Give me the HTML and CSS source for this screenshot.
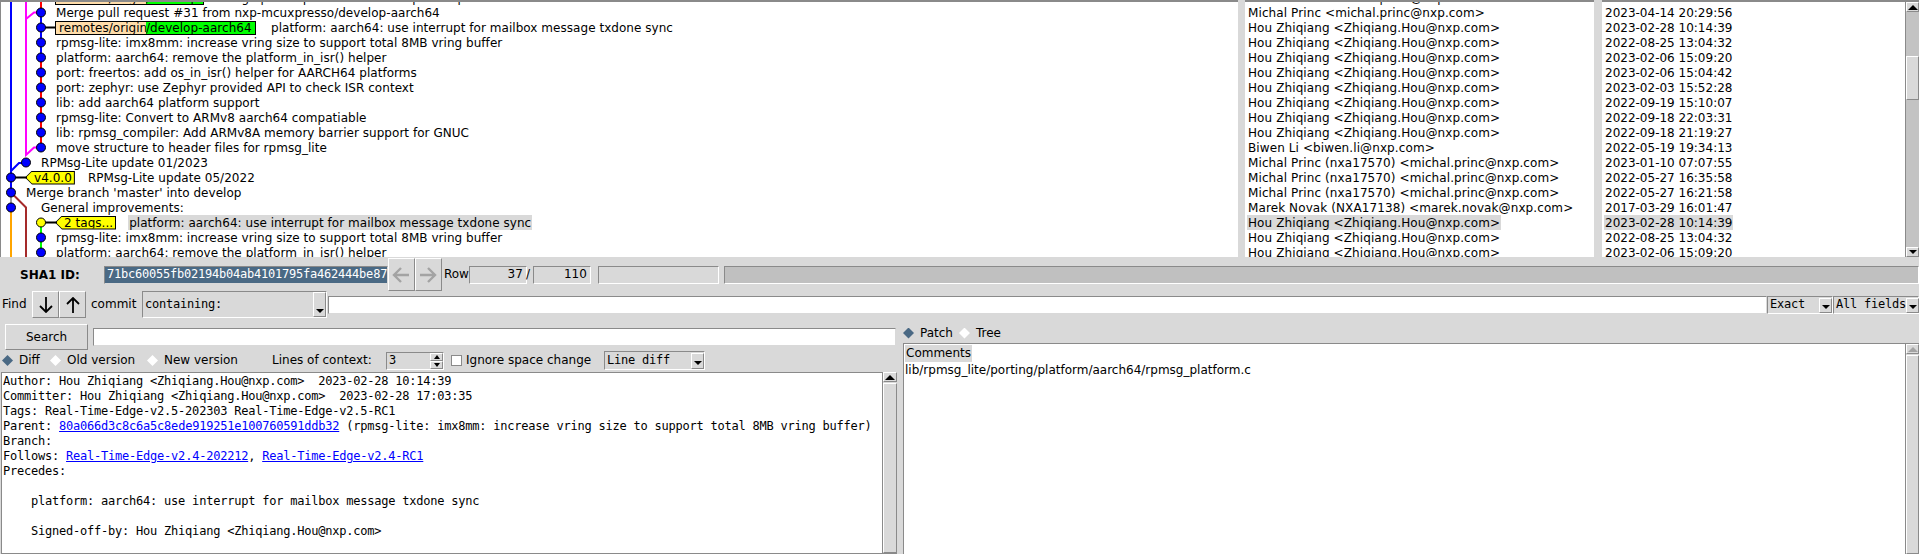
FILE: index.html
```html
<!DOCTYPE html>
<html lang="en">
<head>
<meta charset="utf-8">
<title>gitk</title>
<link rel="stylesheet" href="styles.css">
</head>
<body>
<section class="top">
  <div class="list graph">
    <div class="rows">
      <div class="row ind56"><span class="ref"><span class="ref-a">remotes/origin</span><span class="ref-b short">/develop</span></span><span class="msg">Merge pull request #32 from nxp-mcuxpresso</span></div>
      <div class="row ind56"><span>Merge pull request #31 from nxp-mcuxpresso/develop-aarch64</span></div>
      <div class="row ind56"><span class="ref"><span class="ref-a">remotes/origin</span><span class="ref-b">/develop-aarch64</span></span><span class="msg">platform: aarch64: use interrupt for mailbox message txdone sync</span></div>
      <div class="row ind56"><span>rpmsg-lite: imx8mm: increase vring size to support total 8MB vring buffer</span></div>
      <div class="row ind56"><span>platform: aarch64: remove the platform_in_isr() helper</span></div>
      <div class="row ind56"><span>port: freertos: add os_in_isr() helper for AARCH64 platforms</span></div>
      <div class="row ind56"><span>port: zephyr: use Zephyr provided API to check ISR context</span></div>
      <div class="row ind56"><span>lib: add aarch64 platform support</span></div>
      <div class="row ind56"><span>rpmsg-lite: Convert to ARMv8 aarch64 compatiable</span></div>
      <div class="row ind56"><span>lib: rpmsg_compiler: Add ARMv8A memory barrier support for GNUC</span></div>
      <div class="row ind56"><span>move structure to header files for rpmsg_lite</span></div>
      <div class="row ind41"><span>RPMsg-Lite update 01/2023</span></div>
      <div class="row ind26"><span class="tag"><span class="tag-in">v4.0.0</span></span><span class="msg">RPMsg-Lite update 05/2022</span></div>
      <div class="row ind26"><span>Merge branch 'master' into develop</span></div>
      <div class="row ind41"><span>General improvements:</span></div>
      <div class="row ind56"><span class="tag"><span class="tag-in">2 tags...</span></span><span class="msg sel">platform: aarch64: use interrupt for mailbox message txdone sync</span></div>
      <div class="row ind56"><span>rpmsg-lite: imx8mm: increase vring size to support total 8MB vring buffer</span></div>
      <div class="row ind56"><span>platform: aarch64: remove the platform_in_isr() helper</span></div>
    </div>
    <svg class="lanes" width="70" height="260" viewBox="0 0 70 260" aria-hidden="true">
      <g fill="none" stroke-width="2">
        <path stroke="#ff00ff" d="M26 0V155L34 147.5H41M26 19L34 12.5H41"/>
        <path stroke="#ff0000" d="M41 0V12.5M41 57.5V147.5"/>
        <path stroke="#0000ff" d="M41 12.5V57.5M11 0V192.5M11 171L19 163H26"/>
        <path stroke="#a0a0a0" d="M11 192.5V207.5"/>
        <path stroke="#ffa500" d="M11 207.5V260"/>
        <path stroke="#a52a2a" d="M11 192.5L26 207.5V260"/>
        <path stroke="#00ff00" d="M41 222.5V260"/>
        <path stroke="#000" d="M41 27.5H56M11 177.5H27M41 222.5H57"/>
      </g>
      <g fill="#0000ff" stroke="#000">
        <circle cx="41" cy="12.5" r="4.5"/><circle cx="41" cy="27.5" r="4.5"/><circle cx="41" cy="42.5" r="4.5"/>
        <circle cx="41" cy="57.5" r="4.5"/><circle cx="41" cy="72.5" r="4.5"/><circle cx="41" cy="87.5" r="4.5"/>
        <circle cx="41" cy="102.5" r="4.5"/><circle cx="41" cy="117.5" r="4.5"/><circle cx="41" cy="132.5" r="4.5"/>
        <circle cx="41" cy="147.5" r="4.5"/><circle cx="26" cy="162.5" r="4.5"/><circle cx="11" cy="177.5" r="4.5"/>
        <circle cx="11" cy="192.5" r="4.5"/><circle cx="11" cy="207.5" r="4.5"/>
        <circle cx="41" cy="222.5" r="4.5" fill="#ffff00"/>
        <circle cx="41" cy="237.5" r="4.5"/><circle cx="41" cy="252.5" r="4.5"/>
      </g>
    </svg>
  </div>
  <div class="sash"></div>
  <div class="list author">
    <div class="rows">
      <div class="row"><span>Michal Princ &lt;michal.princ@nxp.com&gt;</span></div>
      <div class="row"><span>Michal Princ &lt;michal.princ@nxp.com&gt;</span></div>
      <div class="row"><span>Hou Zhiqiang &lt;Zhiqiang.Hou@nxp.com&gt;</span></div>
      <div class="row"><span>Hou Zhiqiang &lt;Zhiqiang.Hou@nxp.com&gt;</span></div>
      <div class="row"><span>Hou Zhiqiang &lt;Zhiqiang.Hou@nxp.com&gt;</span></div>
      <div class="row"><span>Hou Zhiqiang &lt;Zhiqiang.Hou@nxp.com&gt;</span></div>
      <div class="row"><span>Hou Zhiqiang &lt;Zhiqiang.Hou@nxp.com&gt;</span></div>
      <div class="row"><span>Hou Zhiqiang &lt;Zhiqiang.Hou@nxp.com&gt;</span></div>
      <div class="row"><span>Hou Zhiqiang &lt;Zhiqiang.Hou@nxp.com&gt;</span></div>
      <div class="row"><span>Hou Zhiqiang &lt;Zhiqiang.Hou@nxp.com&gt;</span></div>
      <div class="row"><span>Biwen Li &lt;biwen.li@nxp.com&gt;</span></div>
      <div class="row"><span>Michal Princ (nxa17570) &lt;michal.princ@nxp.com&gt;</span></div>
      <div class="row"><span>Michal Princ (nxa17570) &lt;michal.princ@nxp.com&gt;</span></div>
      <div class="row"><span>Michal Princ (nxa17570) &lt;michal.princ@nxp.com&gt;</span></div>
      <div class="row"><span>Marek Novak (NXA17138) &lt;marek.novak@nxp.com&gt;</span></div>
      <div class="row"><span class="sel">Hou Zhiqiang &lt;Zhiqiang.Hou@nxp.com&gt;</span></div>
      <div class="row"><span>Hou Zhiqiang &lt;Zhiqiang.Hou@nxp.com&gt;</span></div>
      <div class="row"><span>Hou Zhiqiang &lt;Zhiqiang.Hou@nxp.com&gt;</span></div>
    </div>
  </div>
  <div class="sash wide"></div>
  <div class="list date">
    <div class="rows">
      <div class="row"><span>2023-04-14 20:32:10</span></div>
      <div class="row"><span>2023-04-14 20:29:56</span></div>
      <div class="row"><span>2023-02-28 10:14:39</span></div>
      <div class="row"><span>2022-08-25 13:04:32</span></div>
      <div class="row"><span>2023-02-06 15:09:20</span></div>
      <div class="row"><span>2023-02-06 15:04:42</span></div>
      <div class="row"><span>2023-02-03 15:52:28</span></div>
      <div class="row"><span>2022-09-19 15:10:07</span></div>
      <div class="row"><span>2022-09-18 22:03:31</span></div>
      <div class="row"><span>2022-09-18 21:19:27</span></div>
      <div class="row"><span>2022-05-19 19:34:13</span></div>
      <div class="row"><span>2023-01-10 07:07:55</span></div>
      <div class="row"><span>2022-05-27 16:35:58</span></div>
      <div class="row"><span>2022-05-27 16:21:58</span></div>
      <div class="row"><span>2017-03-29 16:01:47</span></div>
      <div class="row"><span class="sel">2023-02-28 10:14:39</span></div>
      <div class="row"><span>2022-08-25 13:04:32</span></div>
      <div class="row"><span>2023-02-06 15:09:20</span></div>
    </div>
  </div>
  <div class="scrollbar top-bar">
    <div class="sb-btn"><span class="tri-up"></span></div>
    <div class="sb-gap one"></div>
    <div class="sb-thumb fixed"></div>
    <div class="sb-gap"></div>
    <div class="sb-btn"><span class="tri-down"></span></div>
  </div>
</section>

<section class="sha-bar">
  <span class="sha-label">SHA1 ID:</span>
  <span class="field sha mono">71bc60055fb02194b04ab4101795fa462444be87</span>
  <span class="tool-btn nav"><svg width="18" height="18" viewBox="0 0 18 18"><path d="M17 9H2M9 2L2 9L9 16" fill="none" stroke="#a3a3a3" stroke-width="2.4"/></svg></span>
  <span class="tool-btn nav"><svg width="18" height="18" viewBox="0 0 18 18"><path d="M1 9H16M9 2L16 9L9 16" fill="none" stroke="#a3a3a3" stroke-width="2.4"/></svg></span>
  <span class="row-label">Row</span>
  <span class="field count">37</span>
  <span class="slash">/</span>
  <span class="field count">110</span>
  <span class="field status"></span>
  <span class="progress"></span>
</section>

<section class="find-bar">
  <span class="find-label">Find</span>
  <span class="tool-btn find-btn"><svg width="16" height="16" viewBox="0 0 16 16"><path d="M8 0V15M2 9L8 15L14 9" fill="none" stroke="#000" stroke-width="1.8"/></svg></span>
  <span class="tool-btn find-btn"><svg width="16" height="16" viewBox="0 0 16 16"><path d="M8 16V1M2 7L8 1L14 7" fill="none" stroke="#000" stroke-width="1.8"/></svg></span>
  <span class="commit-label">commit</span>
  <span class="combo containing mono"><span class="combo-text">containing:</span><span class="combo-btn"><span class="tri-down"></span></span></span>
  <span class="entry find-entry"></span>
  <span class="combo exact mono"><span class="combo-text">Exact</span><span class="combo-btn"><span class="tri-down"></span></span></span>
  <span class="combo fields mono"><span class="combo-text">All fields</span><span class="combo-btn"><span class="tri-down"></span></span></span>
</section>

<section class="lower">
  <div class="left">
    <div class="search-bar">
      <span class="search-btn">Search</span>
      <span class="entry search-entry"></span>
    </div>
    <div class="diff-bar">
      <span class="radio on"></span><span class="opt diff-opt">Diff</span>
      <span class="radio"></span><span class="opt old-opt">Old version</span>
      <span class="radio"></span><span class="opt new-opt">New version</span>
      <span class="context">Lines of context:</span>
      <span class="spin mono"><span class="spin-val">3</span><span class="spin-btns"><span class="spin-btn"><span class="tri-up"></span></span><span class="spin-btn"><span class="tri-down"></span></span></span></span>
      <span class="check"></span><span class="check-label">Ignore space change</span>
      <span class="combo line-diff mono"><span class="combo-text">Line diff</span><span class="combo-btn"><span class="tri-down"></span></span></span>
    </div>
    <div class="text-pane">
<pre class="details mono">Author: Hou Zhiqiang &lt;Zhiqiang.Hou@nxp.com&gt;  2023-02-28 10:14:39
Committer: Hou Zhiqiang &lt;Zhiqiang.Hou@nxp.com&gt;  2023-02-28 17:03:35
Tags: Real-Time-Edge-v2.5-202303 Real-Time-Edge-v2.5-RC1
Parent: <a href="#p">80a066d3c8c6a5c8ede919251e100760591ddb32</a> (rpmsg-lite: imx8mm: increase vring size to support total 8MB vring buffer)
Branch:
Follows: <a href="#f1">Real-Time-Edge-v2.4-202212</a>, <a href="#f2">Real-Time-Edge-v2.4-RC1</a>
Precedes:

    platform: aarch64: use interrupt for mailbox message txdone sync

    Signed-off-by: Hou Zhiqiang &lt;Zhiqiang.Hou@nxp.com&gt;</pre>
      <div class="scrollbar low-bar">
        <div class="sb-btn"><span class="tri-up"></span></div>
        <div class="sb-thumb"></div>
      </div>
    </div>
  </div>
  <div class="right">
    <div class="view-bar">
      <span class="radio on"></span><span class="opt patch-opt">Patch</span>
      <span class="radio"></span><span class="opt">Tree</span>
    </div>
    <div class="text-pane files">
      <div class="file-list">
        <div class="file"><span class="sel">Comments</span></div>
        <div class="file">lib/rpmsg_lite/porting/platform/aarch64/rpmsg_platform.c</div>
      </div>
      <div class="scrollbar files-bar">
        <div class="sb-btn"><span class="tri-up off"></span></div>
        <div class="sb-thumb"></div>
      </div>
    </div>
  </div>
</section>
</body>
</html>
```

FILE: styles.css
```css
* { box-sizing: border-box; }
html, body { margin: 0; padding: 0; }
body {
  width: 1919px;
  height: 554px;
  overflow: hidden;
  background: #d9d9d9;
  color: #000;
  font: 12px/15px "DejaVu Sans", sans-serif;
}
.mono { font-family: "DejaVu Sans Mono", monospace; font-size: 12px; letter-spacing: -0.22px; white-space: nowrap; }
.sel { background: #d9d9d9; }

/* commit list */
.top { display: flex; height: 257px; }
.list {
  position: relative;
  background: #fff;
  overflow: hidden;
  border-top: 2px solid #8a8a8a;
  white-space: nowrap;
}
.graph { width: 1238px; border-left: 1px solid #8a8a8a; letter-spacing: 0.04px; }
.author { width: 349px; padding-left: 2px; letter-spacing: 0.1px; }
.date { width: 303px; padding-left: 2px; }
.sash { width: 7px; }
.sash.wide { width: 8px; }
.rows { margin-top: -12px; }
.row { height: 15px; display: flex; align-items: center; }
.row > span { height: 15px; padding: 1px 1px 0; }
.ind56 { padding-left: 54px; }
.ind41 { padding-left: 39px; }
.ind26 { padding-left: 24px; }
.row > .msg { margin-left: 14px; }
.row > .tag + .msg { margin-left: 12px; }
.lanes { position: absolute; top: -2px; left: -1px; }
.row > .ref {
  display: flex;
  height: 14px;
  padding: 0;
  border: 1px solid #000;
  line-height: 12px;
}
.ref-a { background: #ffddaa; padding-left: 3px; width: 90px; }
.ref-b { background: #00ff00; width: 109px; }
.ref-b.short { width: 57px; }
.row > .tag {
  display: flex;
  height: 14px;
  padding: 1px;
  background: #000;
  clip-path: polygon(7px 0, 100% 0, 100% 100%, 7px 100%, 0 50%);
}
.tag-in {
  background: #ffff00;
  padding: 0 2px 0 8px;
  line-height: 12px;
  clip-path: polygon(6px 0, 100% 0, 100% 100%, 6px 100%, 0 50%);
}

/* scrollbars */
.scrollbar {
  width: 14px;
  display: flex;
  flex-direction: column;
  background: #c3c3c3;
  border-left: 1px solid #8a8a8a;
}
.top-bar { border-top: 2px solid #8a8a8a; }
.sb-btn {
  flex: none;
  height: 10px;
  background: #d9d9d9;
  border: 1px solid;
  border-color: #fff #8a8a8a #8a8a8a #fff;
  display: flex;
  align-items: center;
  justify-content: center;
}
.sb-gap { flex: 1; }
.sb-gap.one { flex: none; height: 44px; }
.sb-thumb {
  flex: 1;
  margin-top: 1px;
  background: #d9d9d9;
  border: 1px solid;
  border-color: #fff #8a8a8a #8a8a8a #fff;
}
.sb-thumb.fixed { flex: none; height: 44px; margin-top: 0; }
.tri-up, .tri-down {
  display: block;
  width: 0;
  height: 0;
  border-left: 5px solid transparent;
  border-right: 5px solid transparent;
}
.tri-up { border-bottom: 5px solid #000; }
.tri-up.off { border-bottom-color: #a3a3a3; }
.tri-down { border-top: 4px solid #000; border-left-width: 4px; border-right-width: 4px; }

/* SHA row */
.sha-bar { display: flex; align-items: center; height: 34px; padding-top: 1px; }
.sha-label { width: 104px; padding-left: 20px; font-weight: bold; margin-top: 1px; }
.field {
  display: block;
  height: 18px;
  line-height: 15px;
  border: 1px solid;
  border-color: #8a8a8a #fff #fff #8a8a8a;
}
.sha {
  width: 284px;
  padding-left: 2px;
  background: #4a6984;
  color: #fff;
  border-color: #8a8a8a #d9d9d9 #d9d9d9 #8a8a8a;
}
.tool-btn {
  display: flex;
  align-items: center;
  justify-content: center;
  background: #d9d9d9;
  border: 1px solid;
  border-color: #fff #8a8a8a #8a8a8a #fff;
}
.nav { width: 27px; height: 33px; }
.row-label { width: 25px; margin-left: 2px; }
.count { width: 58px; text-align: right; padding-right: 3px; }
.slash { width: 7px; margin-left: -1px; }
.status { width: 121px; margin-left: 7px; }
.progress {
  width: 1196px;
  height: 18px;
  margin-left: 5px;
  background: #c0c0c0;
  border: 1px solid;
  border-color: #8a8a8a #fff #fff #8a8a8a;
}

/* find row */
.find-bar { display: flex; align-items: center; height: 27px; }
.find-label { width: 32px; padding-left: 2px; }
.find-btn { width: 27px; height: 27px; }
.commit-label { width: 51px; margin-left: 5px; }
.entry {
  display: block;
  background: #fff;
  height: 18px;
  border: 1px solid;
  border-color: #8a8a8a #d9d9d9 #d9d9d9 #8a8a8a;
}
.combo {
  display: flex;
  background: #d9d9d9;
  border: 1px solid;
  border-color: #8a8a8a #fff #fff #8a8a8a;
}
.combo-text { flex: 1; padding-left: 2px; display: flex; align-items: center; }
.combo-btn {
  flex: none;
  width: 13px;
  margin-top: 1px;
  background: #d9d9d9;
  border: 1px solid;
  border-color: #fff #8a8a8a #8a8a8a #fff;
  display: flex;
  align-items: flex-end;
  justify-content: center;
  padding-bottom: 3px;
}
.containing { width: 185px; height: 27px; }
.containing .combo-btn { margin-top: 0; }
.find-entry { width: 1439px; margin-left: 1px; }
.exact { width: 66px; height: 18px; }
.fields { width: 86px; height: 18px; }

/* lower half */
.lower { display: flex; height: 236px; }
.left { width: 897px; display: flex; flex-direction: column; }
.right { flex: 1; margin-left: 6px; display: flex; flex-direction: column; }
.search-bar { display: flex; align-items: center; height: 27px; margin-top: 5px; padding-left: 5px; }
.search-btn {
  width: 83px;
  height: 26px;
  line-height: 24px;
  text-align: center;
  background: #d9d9d9;
  border: 1px solid;
  border-color: #fff #8a8a8a #8a8a8a #fff;
}
.search-entry { width: 803px; margin-left: 5px; }
.diff-bar { display: flex; align-items: center; height: 21px; padding-left: 2px; }
.radio {
  flex: none;
  width: 11px;
  height: 11px;
  background: #fff;
  clip-path: polygon(50% 0, 100% 50%, 50% 100%, 0 50%);
}
.radio.on { background: #4a6984; }
.opt { margin-left: 6px; }
.diff-opt { width: 31px; }
.old-opt { width: 80px; }
.new-opt { width: 108px; }
.context { width: 114px; }
.spin {
  width: 58px;
  height: 18px;
  display: flex;
  justify-content: space-between;
  border: 1px solid;
  border-color: #8a8a8a #fff #fff #8a8a8a;
  padding-left: 2px;
  line-height: 15px;
}
.spin-btns { width: 13px; display: flex; flex-direction: column; }
.spin-btn {
  flex: 1;
  background: #d9d9d9;
  border: 1px solid;
  border-color: #fff #8a8a8a #8a8a8a #fff;
  display: flex;
  align-items: center;
  justify-content: center;
}
.spin-btn .tri-up { border-left-width: 3px; border-right-width: 3px; border-bottom-width: 4px; }
.spin-btn .tri-down { border-left-width: 3px; border-right-width: 3px; }
.check {
  flex: none;
  width: 11px;
  height: 11px;
  margin-left: 7px;
  background: #fff;
  border: 1px solid #8a8a8a;
}
.check-label { width: 138px; margin-left: 4px; }
.line-diff { width: 101px; height: 19px; }

.text-pane {
  flex: 1;
  min-height: 0;
  display: flex;
  margin-top: 1px;
  margin-left: 1px;
  border-top: 1px solid #8a8a8a;
  border-left: 1px solid #8a8a8a;
  border-bottom: 1px solid #8a8a8a;
  background: #fff;
}
.details {
  flex: 1;
  margin: 0;
  padding: 1px 0 0 1px;
  line-height: 15px;
  overflow: hidden;
  white-space: pre;
}
.details a { color: #0000ff; }
.low-bar { flex: none; width: 15px; margin-top: -1px; background: #d9d9d9; }
.view-bar { display: flex; align-items: center; height: 25px; padding: 5px 0 0 0; }
.patch-opt { margin-right: 6px; }
.text-pane.files { margin: 0; border-bottom: 0; }
.file-list { flex: 1; padding: 1px 0 0 1px; }
.file { height: 17px; line-height: 17px; }
.file .sel { display: inline-block; padding: 0 1px; height: 17px; }
.files-bar { flex: none; background: #d9d9d9; }
```
